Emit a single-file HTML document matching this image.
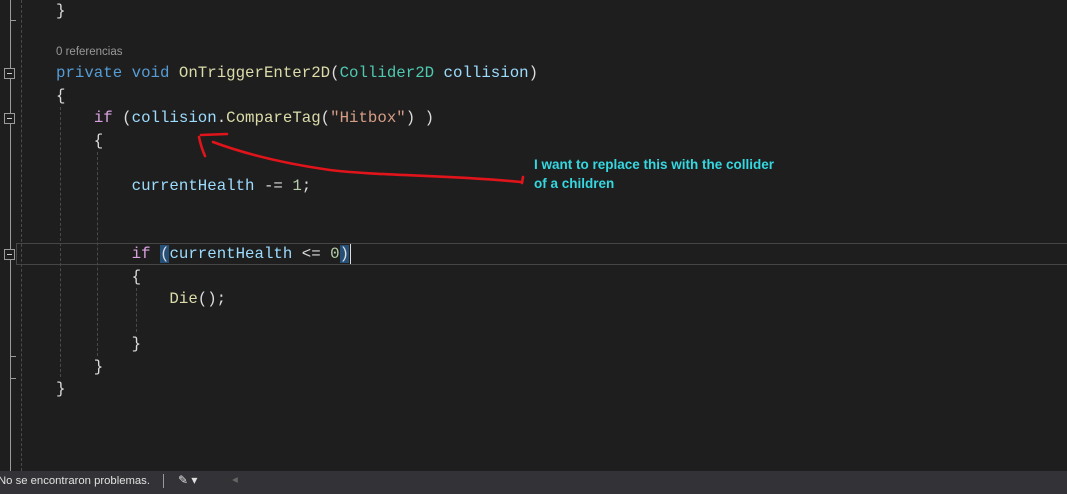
<!DOCTYPE html>
<html><head><meta charset="utf-8"><style>
body{margin:0;width:1067px;height:494px;background:#1e1e1e;overflow:hidden;position:relative;font-family:"Liberation Mono",monospace;}
.l{position:absolute;left:0;white-space:pre;font-size:15.75px;line-height:22.6px;color:#dcdcdc;}
.k{color:#569cd6}.m{color:#dcdcaa}.t{color:#4ec9b0}.v{color:#9cdcfe}.s{color:#d69d85}.n{color:#b5cea8}.p{color:#d8a0df}
.fold{position:absolute;left:4px;width:9px;height:9px;border:1px solid #9a9a9a;background:#1e1e1e;}
.fold:after{content:"";position:absolute;left:2px;top:4px;width:5px;height:1px;background:#ccc;}
.dash{position:absolute;width:0;border-left:1px dashed #4a4a4a;}
</style></head><body>
<div style="position:absolute;left:10px;top:0;width:1px;height:471px;background:#9a9a9a"></div>
<div style="position:absolute;left:10px;top:20px;width:6px;height:1px;background:#9a9a9a"></div>
<div style="position:absolute;left:10px;top:356px;width:6px;height:1px;background:#9a9a9a"></div>
<div style="position:absolute;left:10px;top:378px;width:6px;height:1px;background:#9a9a9a"></div>
<div class="dash" style="left:21px;top:0;height:471px"></div>
<div class="dash" style="left:60px;top:107px;height:270px"></div>
<div class="dash" style="left:97px;top:152px;height:204px"></div>
<div class="dash" style="left:136px;top:288px;height:44px"></div>
<div style="position:absolute;left:16px;top:243px;width:1060px;height:20px;border:1px solid #464646"></div>
<div class="fold" style="top:68px"></div>
<div class="fold" style="top:113px"></div>
<div class="fold" style="top:249px"></div>
<div class="l" style="top:0px;left:56px">}</div>
<div style="position:absolute;left:56px;top:46px;font:11.5px 'Liberation Sans',sans-serif;color:#999">0 referencias</div>
<div class="l" style="top:62px;left:56px"><span class="k">private</span> <span class="k">void</span> <span class="m">OnTriggerEnter2D</span>(<span class="t">Collider2D</span> <span class="v">collision</span>)</div>
<div class="l" style="top:85px;left:56px">{</div>
<div class="l" style="top:107px;left:56px">    <span class="p">if</span> (<span class="v">collision</span>.<span class="m">CompareTag</span>(<span class="s">"Hitbox"</span>) )</div>
<div class="l" style="top:130px;left:56px">    {</div>
<div class="l" style="top:175px;left:56px">        <span class="v">currentHealth</span> -= <span class="n">1</span>;</div>
<div class="l" style="top:243px;left:56px">        <span class="p">if</span> <span style="background:#264f78">(</span><span class="v">currentHealth</span> &lt;= <span class="n">0</span><span style="background:#264f78">)</span></div>
<div class="l" style="top:266px;left:56px">        {</div>
<div class="l" style="top:288px;left:56px">            <span class="m">Die</span>();</div>
<div class="l" style="top:333px;left:56px">        }</div>
<div class="l" style="top:356px;left:56px">    }</div>
<div class="l" style="top:378px;left:56px">}</div>
<div style="position:absolute;left:350px;top:244px;width:1px;height:20px;background:#ddd"></div>
<svg style="position:absolute;left:0;top:0" width="1067" height="494">
<g fill="none" stroke="#e0141a" stroke-width="2.6" stroke-linecap="round">
<path d="M201 135 L227 134"/>
<path d="M199 137 Q201 147 205 156"/>
<path d="M213 142 C240 152 280 163 330 170 C380 176 450 175 521 182"/>
<path d="M523 177 L522 183"/>
</g></svg>
<div style="position:absolute;left:534px;top:155px;font:600 13.5px/19px 'Liberation Sans',sans-serif;color:#35d7e0">I want to replace this with the collider<br>of a children</div>
<div style="position:absolute;left:0;top:471px;width:1067px;height:23px;background:#333337;font:11.3px/19px 'Liberation Sans',sans-serif;color:#e0e0e0">
<span style="position:absolute;left:-2px;top:1px">No se encontraron problemas.</span>
<span style="position:absolute;left:163px;top:3px;width:1px;height:14px;background:#999"></span>
<span style="position:absolute;left:178px;top:0px;font-size:12px">✎ ▾</span>
<span style="position:absolute;left:232px;top:0px;color:#666">◂</span>
</div>
</body></html>
